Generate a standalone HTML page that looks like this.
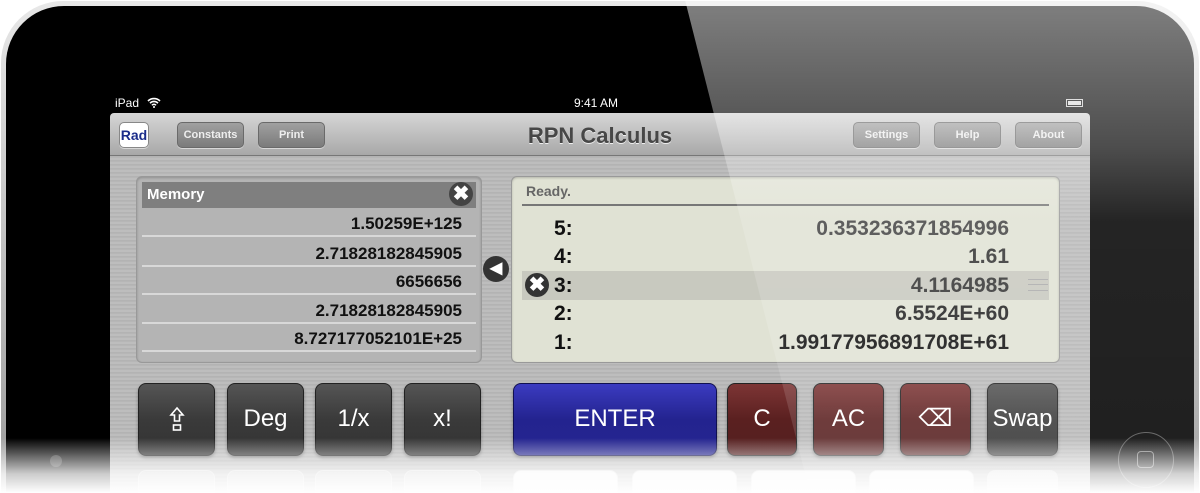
<!DOCTYPE html>
<html><head><meta charset="utf-8"><style>
*{margin:0;padding:0;box-sizing:border-box}
html,body{width:1200px;height:493px;overflow:hidden;background:#fff}
body{font-family:"Liberation Sans",sans-serif;position:relative}
#wrap{position:absolute;left:0;top:0;width:1200px;height:493px;overflow:hidden}
.abs{position:absolute}
#ipad{left:1px;top:1px;width:1198px;height:492px;border-radius:62px 62px 0 0;background:linear-gradient(#e8e8e8,#9a9a9a);}
#bezel{left:6px;top:6px;width:1188px;height:487px;border-radius:58px 58px 0 0;background:#000}
#screen{left:110px;top:94px;width:980px;height:399px;background:#000}
#status{left:110px;top:94px;width:980px;height:19px;color:#fff;font-size:12px}
#nav{left:110px;top:113px;width:980px;height:43px;background:linear-gradient(#d6d6d6,#a8a8a8);border-bottom:1px solid #777;border-radius:4px 4px 0 0}
#body{left:110px;top:156px;width:980px;height:337px;background:repeating-linear-gradient(0deg,#b3b3b3 0 1px,#bdbdbd 1px 3px,#b6b6b6 3px 4px)}
.nb{position:absolute;top:122px;height:26px;border-radius:5px;background:linear-gradient(#a0a0a0,#7b7b7b);border:1px solid #6a6a6a;color:#eee;font-size:11px;font-weight:bold;text-align:center;line-height:24px;box-shadow:0 1px 0 rgba(255,255,255,.5)}
.panel{border-radius:5px;box-shadow:0 0 0 1px #999,inset 0 1px 2px rgba(0,0,0,.2)}
.mrow{position:absolute;left:142px;width:334px;height:28px;border-bottom:2px solid #d8d8d8;text-align:right;padding-right:14px;font-weight:bold;font-size:17px;line-height:30px;color:#111}
.srow{position:absolute;left:522px;width:527px;height:28px;font-weight:bold;font-size:21px;line-height:29px;color:#111}
.srow .l{position:absolute;left:32px}
.srow .v{position:absolute;right:40px}
.key{position:absolute;top:383px;height:73px;border-radius:8px;color:#fff;font-size:24px;text-align:center;line-height:70px;border:1px solid #222;box-shadow:0 2px 3px rgba(0,0,0,.35)}
.dk{background:linear-gradient(#555,#3a3a3a 50%,#333)}
.rd{background:linear-gradient(#7d3535,#5a2020 50%,#542020)}
.bl{background:linear-gradient(#3b3bc0,#23238f 50%,#252590);border-color:#101050}
.k2{position:absolute;top:470px;height:23px;border-radius:8px 8px 0 0;background:#f4f4f4;border:1px solid #ddd;border-bottom:0}
.xc{position:absolute;width:24px;height:24px;border-radius:50%;background:#333;color:#fff;font-size:20px;font-weight:bold;line-height:24px;text-align:center}
</style></head><body><div id="wrap">
<div id="ipad" class="abs"></div>
<div id="bezel" class="abs"></div>
<div id="screen" class="abs"></div>
<div id="status" class="abs"><span class="abs" style="left:5px;top:2px">iPad</span>
<svg class="abs" style="left:37px;top:3px" width="14" height="11" viewBox="0 0 14 11"><path d="M1 4a8.5 8.5 0 0 1 12 0M3 6.2a5.5 5.5 0 0 1 8 0M5 8.3a2.5 2.5 0 0 1 4 0" stroke="#fff" stroke-width="1.6" fill="none"/><circle cx="7" cy="10" r="1" fill="#fff"/></svg>
<span class="abs" style="left:464px;top:2px">9:41 AM</span>
<div class="abs" style="left:956px;top:5px;width:17px;height:8px;border:1px solid #ccc;padding:1px"><div style="background:#ddd;width:100%;height:100%"></div></div></div>
<div id="nav" class="abs"></div>
<div class="nb" style="left:119px;width:30px;background:#fff;color:#1a2c8a;font-size:14px;border-color:#888">Rad</div>
<div class="nb" style="left:177px;width:67px">Constants</div>
<div class="nb" style="left:258px;width:67px">Print</div>
<div class="abs" style="left:450px;top:123px;width:300px;text-align:center;font-size:22px;font-weight:bold;color:#474747;text-shadow:0 1px 0 #eee">RPN Calculus</div>
<div class="nb" style="left:853px;width:67px">Settings</div>
<div class="nb" style="left:934px;width:67px">Help</div>
<div class="nb" style="left:1015px;width:67px">About</div>
<div id="body" class="abs"></div>
<div class="abs panel" style="left:137px;top:177px;width:344px;height:185px;background:#b4b4b4"></div>
<div class="abs" style="left:142px;top:182px;width:334px;height:26px;background:#7f7f7f;color:#fff;font-weight:bold;font-size:15px;line-height:26px;padding-left:5px">Memory</div>
<div class="xc" style="left:449px;top:182px;background:#444">✖</div>
<div class="mrow" style="top:209px">1.50259E+125</div>
<div class="mrow" style="top:239px">2.71828182845905</div>
<div class="mrow" style="top:267px">6656656</div>
<div class="mrow" style="top:296px">2.71828182845905</div>
<div class="mrow" style="top:324px">8.727177052101E+25</div>
<div class="xc" style="left:483px;top:256px;width:26px;height:26px;font-size:16px;line-height:26px">◀</div>
<div class="abs panel" style="left:512px;top:177px;width:547px;height:185px;background:#e0e2d4"></div>
<div class="abs" style="left:526px;top:183px;font-size:14px;font-weight:bold;color:#666">Ready.</div>
<div class="abs" style="left:522px;top:204px;width:527px;height:2px;background:#777"></div>
<div class="abs" style="left:522px;top:271px;width:527px;height:29px;background:#c8c9bf"></div>
<div class="srow" style="top:214px"><span class="l">5:</span><span class="v" style="color:#444">0.353236371854996</span></div>
<div class="srow" style="top:242px"><span class="l">4:</span><span class="v" style="color:#333">1.61</span></div>
<div class="srow" style="top:271px"><span class="l">3:</span><span class="v" style="color:#333">4.1164985</span></div>
<div class="srow" style="top:299px"><span class="l">2:</span><span class="v" style="color:#222">6.5524E+60</span></div>
<div class="srow" style="top:328px"><span class="l">1:</span><span class="v">1.99177956891708E+61</span></div>
<div class="xc" style="left:525px;top:273px">✖</div>
<div class="abs" style="left:1028px;top:279px;width:20px;height:12px;border-top:1px solid #aaa;border-bottom:1px solid #aaa"><div style="margin-top:4px;border-top:1px solid #aaa"></div></div>
<div class="key dk" style="left:138px;width:77px"><svg style="margin-top:22px" width="16" height="26" viewBox="0 0 16 26"><path d="M8 2L2 9h3.5v6h5V9H14z" fill="none" stroke="#fff" stroke-width="1.6"/><rect x="4.5" y="19" width="7" height="5" fill="none" stroke="#fff" stroke-width="1.6"/></svg></div>
<div class="key dk" style="left:227px;width:77px">Deg</div>
<div class="key dk" style="left:315px;width:77px">1/x</div>
<div class="key dk" style="left:404px;width:77px">x!</div>
<div class="key bl" style="left:513px;width:204px">ENTER</div>
<div class="key rd" style="left:727px;width:70px">C</div>
<div class="key rd" style="left:813px;width:71px">AC</div>
<div class="key rd" style="left:900px;width:71px">⌫</div>
<div class="key dk" style="left:987px;width:71px">Swap</div>
<div class="k2" style="left:138px;width:77px;background:#ccc"></div>
<div class="k2" style="left:227px;width:77px;background:#ccc"></div>
<div class="k2" style="left:315px;width:77px;background:#ccc"></div>
<div class="k2" style="left:404px;width:77px;background:#ccc"></div>
<div class="k2" style="left:513px;width:105px"></div>
<div class="k2" style="left:632px;width:105px"></div>
<div class="k2" style="left:751px;width:105px"></div>
<div class="k2" style="left:869px;width:105px"></div>
<div class="k2" style="left:987px;width:71px;background:#ddd"></div>
<div class="abs" style="left:1118px;top:432px;width:56px;height:56px;border-radius:50%;border:1px solid #555"></div>
<div class="abs" style="left:1137px;top:451px;width:17px;height:17px;border-radius:4px;border:1.5px solid #777"></div>
<div class="abs" style="left:50px;top:455px;width:12px;height:12px;border-radius:50%;background:#333"></div>
<div class="abs" style="left:0;top:0;width:1200px;height:493px;background:linear-gradient(rgba(255,255,255,.5),rgba(255,255,255,.3) 30%,rgba(255,255,255,.14) 45%,rgba(255,255,255,.12));clip-path:polygon(685px 0,1200px 0,1200px 493px,810px 493px)"></div>
<div class="abs" style="left:0;top:438px;width:1200px;height:55px;background:linear-gradient(rgba(255,255,255,0),rgba(255,255,255,.8) 65%,#fff)"></div>
</div></body></html>
